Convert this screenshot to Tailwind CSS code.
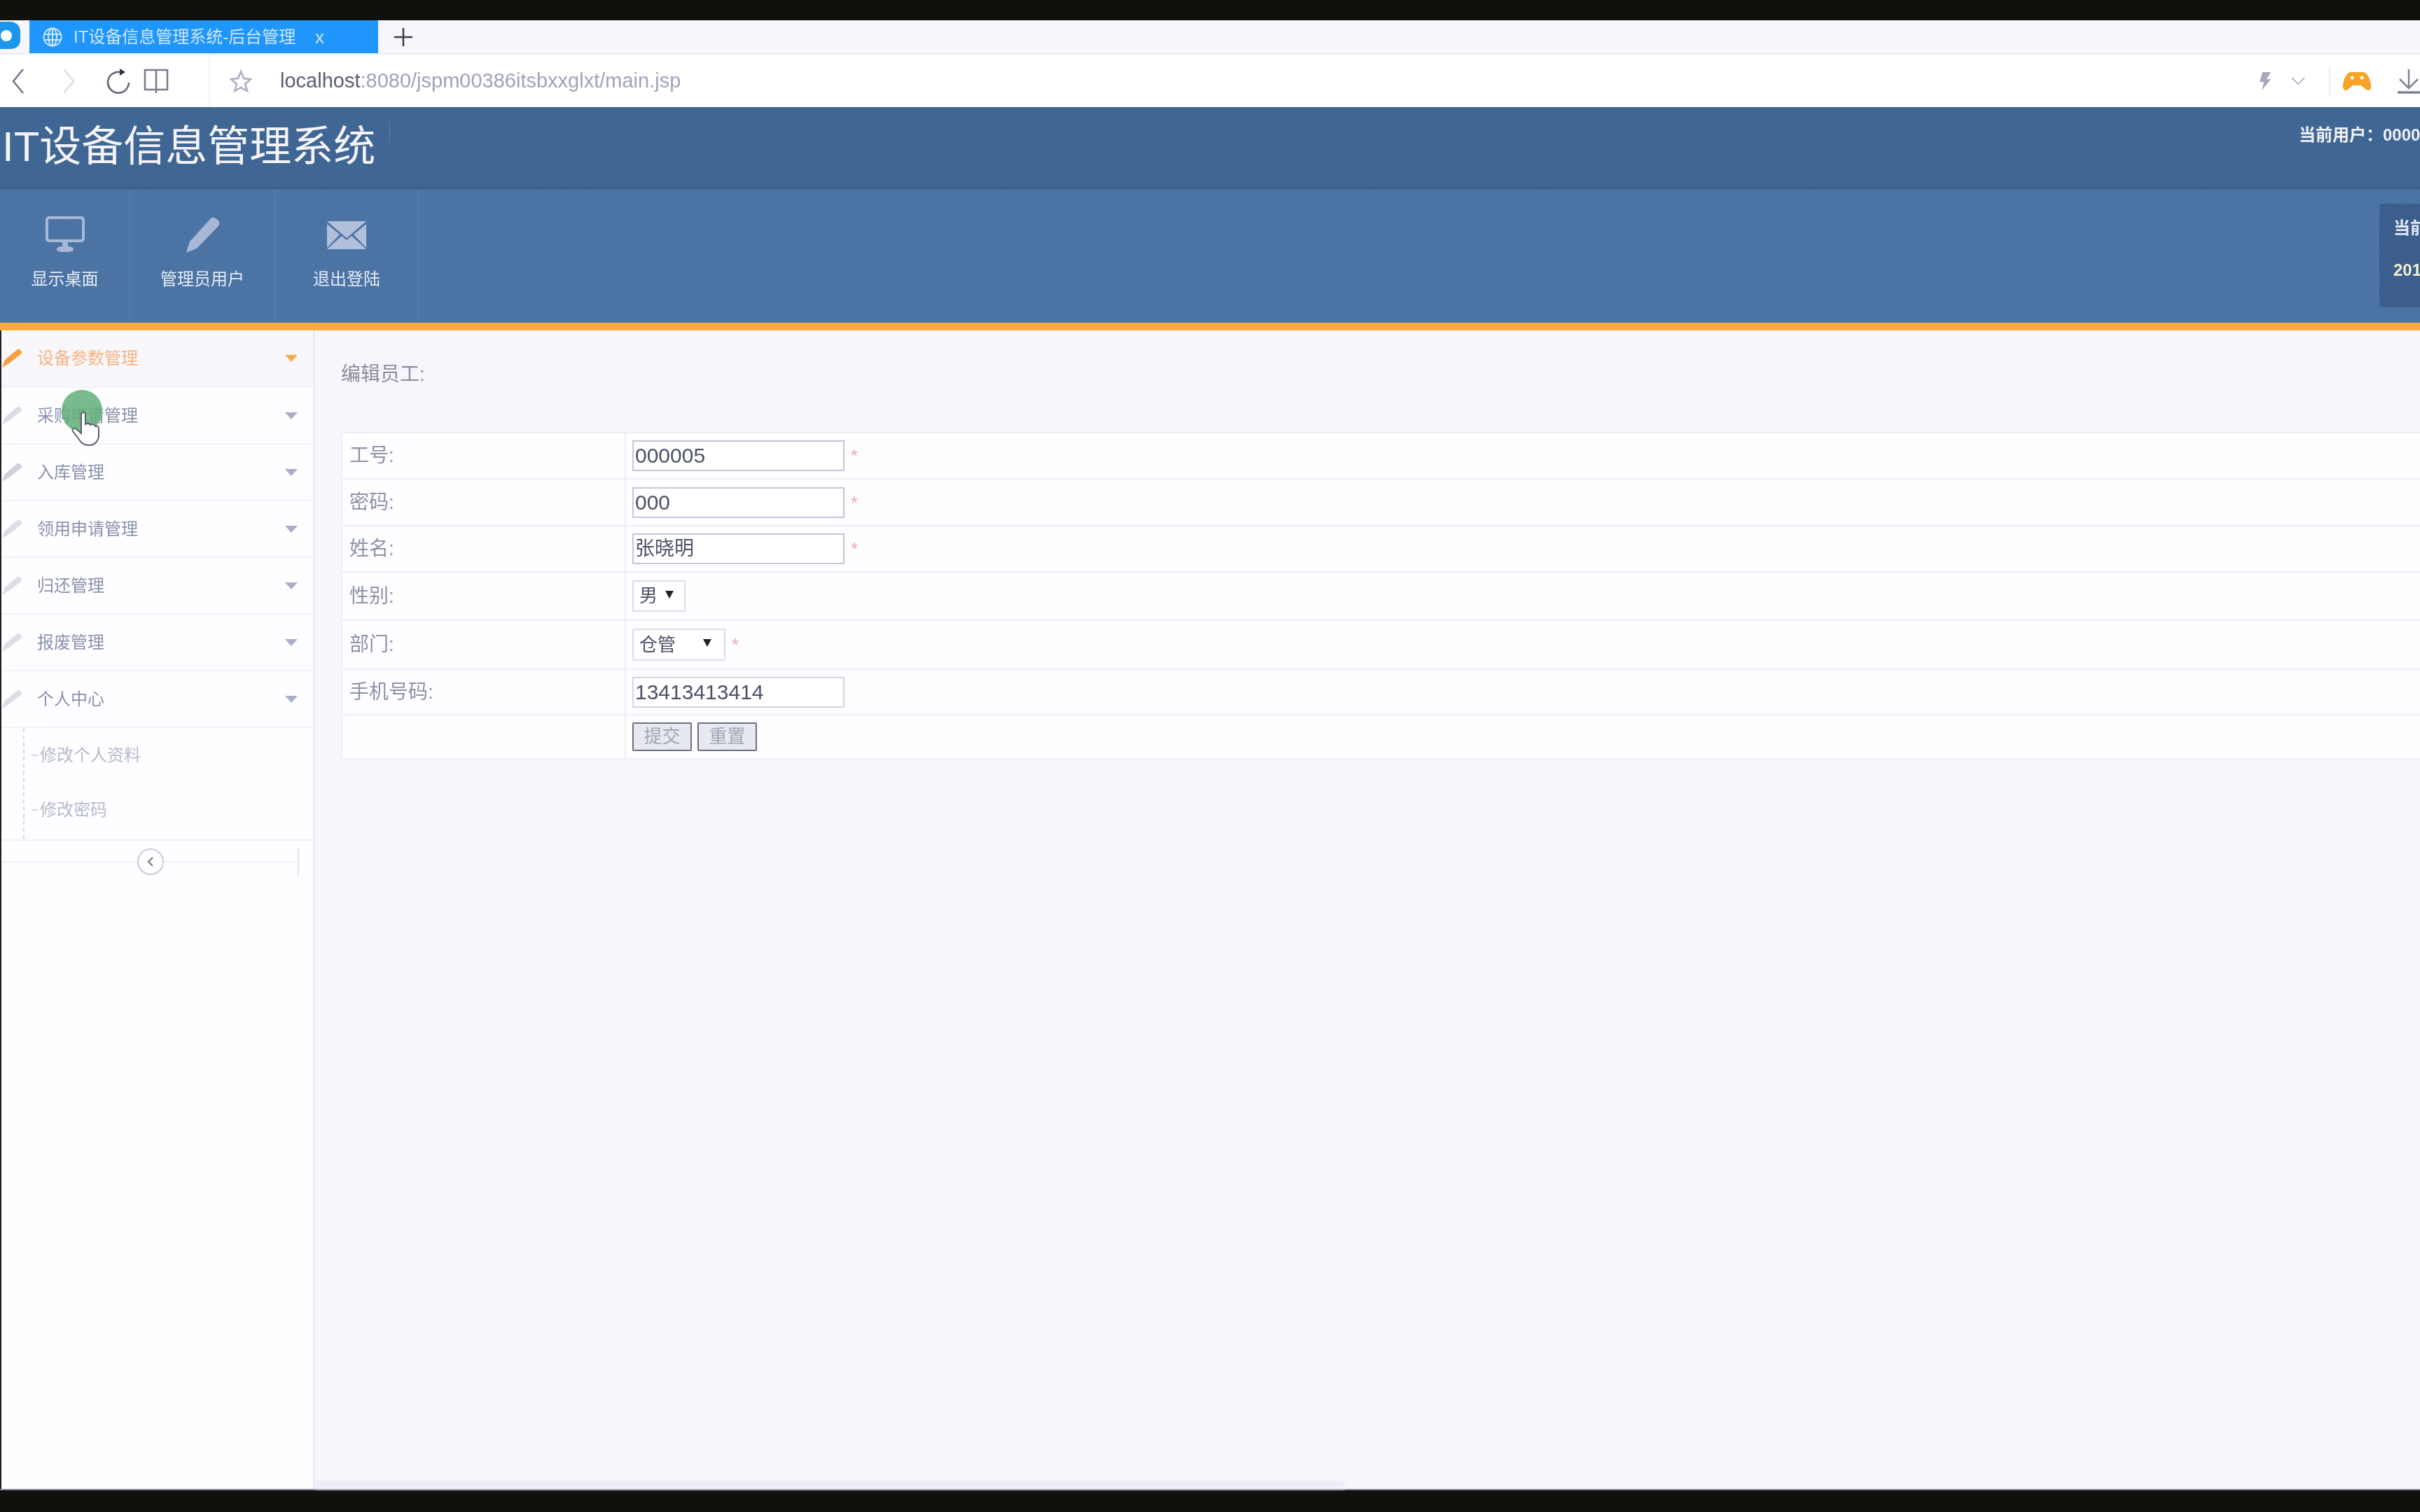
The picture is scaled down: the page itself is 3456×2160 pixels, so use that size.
<!DOCTYPE html>
<html lang="zh">
<head>
<meta charset="utf-8">
<title>IT设备信息管理系统</title>
<script src="https://cdn.jsdelivr.net/npm/@tailwindcss/browser@4"></script>
</head>
<body class="m-0 bg-[#10110d]">
<div class="relative w-[3456px] h-[2160px] overflow-hidden bg-[#10110d] flex flex-col font-['Liberation_Sans','Noto_Sans_CJK_SC',sans-serif]">
  <div class="h-[29px] shrink-0 bg-[#10110d]"></div>

  <!-- tab strip -->
  <div class="h-[49px] shrink-0 flex items-stretch bg-[#f8f6fd] border-b-2 border-[#ecebf2] blur-[0.6px]">
    <div class="w-[42px] shrink-0 flex items-start">
      <svg width="32" height="46" viewBox="0 0 32 46"><path d="M0 2h14c9 0 15 6 15 14v12c0 8-6 13-14 13H0z" fill="#1b96ea"/><circle cx="9" cy="22" r="8" fill="#fff"/></svg>
    </div>
    <div class="w-[498px] shrink-0 bg-[#1f96fb] flex items-center pl-[19px] text-[24px] text-[#cfe6fb]">
      <svg width="28" height="28" viewBox="0 0 28 28" fill="none" stroke="#cfe6fb" stroke-width="2"><circle cx="14" cy="14" r="12.5"/><ellipse cx="14" cy="14" rx="6" ry="12.5"/><path d="M2 10h24M2 18h24M14 1.500v25"/></svg>
      <span class="ml-[16px] w-[345px] whitespace-nowrap">IT设备信息管理系统-后台管理</span>
      <span class="text-[26px] leading-none">x</span>
    </div>
    <div class="ml-[22px] flex items-center">
      <svg width="28" height="28" viewBox="0 0 28 28" stroke="#3a3d48" stroke-width="2.500"><path d="M14 1v26M1 14h26"/></svg>
    </div>
  </div>

  <!-- address bar -->
  <div class="h-[75px] shrink-0 flex items-center bg-white blur-[0.6px]">
    <div class="w-[300px] shrink-0 flex items-center h-full border-r-2 border-[#f2f1f6]">
      <svg class="ml-[16px]" width="20" height="40" viewBox="0 0 20 40" fill="none" stroke="#6f7486" stroke-width="2.500"><path d="M17 3 3 20l14 17"/></svg>
      <svg class="ml-[52px]" width="20" height="40" viewBox="0 0 20 40" fill="none" stroke="#dcdde8" stroke-width="2.500"><path d="M3 3l14 17L3 37"/></svg>
      <svg class="ml-[44px]" width="36" height="38" viewBox="0 0 36 38" fill="none" stroke="#5d6172" stroke-width="2.500"><path d="M20 6A15 15 0 1 0 32 21"/><path d="M19 1l8 5-8 5z" fill="#2f3240" stroke="none"/></svg>
      <svg class="ml-[17px]" width="36" height="38" viewBox="0 0 36 38" fill="none" stroke="#777b8d" stroke-width="2.500"><path d="M2 3h32v28H2zM18 3v33"/></svg>
    </div>
    <svg class="ml-[28px]" width="32" height="34" viewBox="0 0 32 34" fill="none" stroke="#a9adc0" stroke-width="2.500"><path d="M16 3l4 10 10 1-8 7 3 10-9-5-9 5 3-10-8-7 10-1z"/></svg>
    <div class="ml-[40px] text-[29px] text-[#a0a4ba] whitespace-nowrap"><span class="text-[#5a5e70]">localhost</span>:8080/jspm00386itsbxxglxt/main.jsp</div>
    <div class="ml-auto flex items-center h-full">
      <svg width="20" height="26" viewBox="0 0 20 26" fill="#a7a8bb"><path d="M7 0h12l-6 10h6L6 26l3-12H3z"/></svg>
      <svg class="ml-[28px]" width="20" height="12" viewBox="0 0 20 12" fill="none" stroke="#b8bbcc" stroke-width="2"><path d="M1 1l9 9 9-9"/></svg>
      <div class="ml-[34px] w-[2px] h-[44px] bg-[#efeef4]"></div>
      <svg class="ml-[17px]" width="42" height="28" viewBox="0 0 42 28"><path d="M12 1h18c6 0 11 12 11 21 0 6-5 6-8 3l-6-5H15l-6 5c-3 3-8 3-8-3C1 13 6 1 12 1z" fill="#f8a327"/><circle cx="14" cy="9" r="2.500" fill="#fff"/><circle cx="28" cy="9" r="2.500" fill="#fff"/></svg>
      <svg class="ml-[37px]" width="32" height="36" viewBox="0 0 32 36" fill="none" stroke="#7e8296" stroke-width="2.500"><path d="M16 1v26M3 15l13 13 13-13"/><path d="M0 34h32" stroke-width="3.500"/></svg>
    </div>
  </div>

  <!-- header -->
  <div class="h-[117px] shrink-0 flex items-start justify-between bg-[#3e6595] bg-[repeating-linear-gradient(135deg,rgba(255,255,255,0.025)_0px,rgba(255,255,255,0.025)_2px,rgba(0,0,0,0.025)_2px,rgba(0,0,0,0.025)_4px)] border-b-2 border-[#365a88] blur-[0.6px]">
    <div class="flex items-start">
      <h1 class="m-0 pl-[3px] mt-[21px] text-[60px] leading-[72px] font-normal text-[#f3f3f8] whitespace-nowrap">IT设备信息管理系统</h1>
      <div class="ml-[20px] mt-[20px] w-[1px] h-[32px] bg-[#6384ad]"></div>
    </div>
    <div class="mt-[24px] w-[173px] shrink-0 overflow-hidden whitespace-nowrap text-[24px] leading-[32px] font-bold text-[#eef0f6]">当前用户：000005</div>
  </div>

  <!-- nav -->
  <div class="h-[191px] shrink-0 flex items-stretch justify-between bg-[#4a74a6] bg-[repeating-linear-gradient(135deg,rgba(255,255,255,0.025)_0px,rgba(255,255,255,0.025)_2px,rgba(0,0,0,0.025)_2px,rgba(0,0,0,0.025)_4px)] blur-[0.6px]">
    <div class="flex items-stretch">
      <div class="w-[186px] flex flex-col items-center border-r border-[#5a81b0] pt-[39px]">
        <svg width="56" height="53" viewBox="0 0 56 53"><rect x="2" y="2" width="52" height="33" rx="3" fill="none" stroke="#a9b7d6" stroke-width="4"/><path d="M24 35h8v8c5 0 8 2 8 4s-1 4-12 4-12-2-12-4 3-4 8-4z" fill="#a9b7d6"/></svg>
        <span class="mt-[21px] text-[24px] leading-[32px] text-[#e6eaf4]">显示桌面</span>
      </div>
      <div class="w-[207px] flex flex-col items-center border-r border-[#5a81b0] pt-[39px]">
        <svg width="52" height="53" viewBox="0 0 52 53"><path d="M38 3c3-3 8 0 11 3 2 3 2 6 0 8L18 46 3 52l5-16z" fill="#a9b7d6"/></svg>
        <span class="mt-[21px] text-[24px] leading-[32px] text-[#e6eaf4]">管理员用户</span>
      </div>
      <div class="w-[205px] flex flex-col items-center border-r border-[#5a81b0] pt-[39px]">
        <svg width="56" height="53" viewBox="0 0 56 53"><path d="M0 7h56L28 31z" fill="#b2bfdb"/><path d="M0 11v34l18-19zM56 11v34L38 26zM0 47h56L35 28l-7 6-7-6z" fill="#b2bfdb"/></svg>
        <span class="mt-[21px] text-[24px] leading-[32px] text-[#e6eaf4]">退出登陆</span>
      </div>
    </div>
    <div class="mt-[21px] h-[148px] w-[58px] shrink-0 rounded-l-[3px] bg-[#3b5e8d] pl-[20px] overflow-hidden text-[24px] whitespace-nowrap">
      <div class="mt-[19px] h-[32px] leading-[32px] font-bold text-[#e4e7f2]">当前时间</div>
      <div class="mt-[28px] h-[32px] leading-[32px] font-bold text-[#f3eecf]">2019</div>
    </div>
  </div>
  <div class="h-[11px] shrink-0 bg-[#f9aa3d]"></div>

  <!-- main -->
  <div class="h-[1655px] shrink-0 flex items-stretch bg-[#f8f6fc] border-l-2 border-[#20211f] blur-[0.7px]">
    <aside class="w-[448px] shrink-0 bg-[#fefdff] border-r-[3px] border-[#eceaf5] text-[24px] text-[#8a92ae]">
      <div class="h-[82px] flex items-center bg-[#f8f7fc] border-b-2 border-[#f3f2f8] text-[#f7b27e]">
        <svg class="ml-[1px]" width="30" height="28" viewBox="0 0 30 28"><path d="M22 1c3-1 7 3 6 6L10 21 0 27l4-11z" fill="#f5a13f"/></svg>
        <span class="ml-[20px]">设备参数管理</span>
        <svg class="ml-auto mr-[22px]" width="18" height="10" viewBox="0 0 18 10"><path d="M0 0h18l-9 10z" fill="#f9a94a"/></svg>
      </div>
      <div class="h-[81px] flex items-center border-b-2 border-[#f3f2f8]">
        <svg class="ml-[1px]" width="30" height="28" viewBox="0 0 30 28"><path d="M22 1c3-1 7 3 6 6L10 21 0 27l4-11z" fill="#dcdde6"/></svg>
        <span class="ml-[20px]">采购申请管理</span>
        <svg class="ml-auto mr-[22px]" width="18" height="10" viewBox="0 0 18 10"><path d="M0 0h18l-9 10z" fill="#a9afc4"/></svg>
      </div>
      <div class="h-[81px] flex items-center border-b-2 border-[#f3f2f8]">
        <svg class="ml-[1px]" width="30" height="28" viewBox="0 0 30 28"><path d="M22 1c3-1 7 3 6 6L10 21 0 27l4-11z" fill="#cfd0dc"/></svg>
        <span class="ml-[20px]">入库管理</span>
        <svg class="ml-auto mr-[22px]" width="18" height="10" viewBox="0 0 18 10"><path d="M0 0h18l-9 10z" fill="#a9afc4"/></svg>
      </div>
      <div class="h-[81px] flex items-center border-b-2 border-[#f3f2f8]">
        <svg class="ml-[1px]" width="30" height="28" viewBox="0 0 30 28"><path d="M22 1c3-1 7 3 6 6L10 21 0 27l4-11z" fill="#dcdde6"/></svg>
        <span class="ml-[20px]">领用申请管理</span>
        <svg class="ml-auto mr-[22px]" width="18" height="10" viewBox="0 0 18 10"><path d="M0 0h18l-9 10z" fill="#a9afc4"/></svg>
      </div>
      <div class="h-[81px] flex items-center border-b-2 border-[#f3f2f8]">
        <svg class="ml-[1px]" width="30" height="28" viewBox="0 0 30 28"><path d="M22 1c3-1 7 3 6 6L10 21 0 27l4-11z" fill="#dcdde6"/></svg>
        <span class="ml-[20px]">归还管理</span>
        <svg class="ml-auto mr-[22px]" width="18" height="10" viewBox="0 0 18 10"><path d="M0 0h18l-9 10z" fill="#a9afc4"/></svg>
      </div>
      <div class="h-[81px] flex items-center border-b-2 border-[#f3f2f8]">
        <svg class="ml-[1px]" width="30" height="28" viewBox="0 0 30 28"><path d="M22 1c3-1 7 3 6 6L10 21 0 27l4-11z" fill="#dcdde6"/></svg>
        <span class="ml-[20px]">报废管理</span>
        <svg class="ml-auto mr-[22px]" width="18" height="10" viewBox="0 0 18 10"><path d="M0 0h18l-9 10z" fill="#a9afc4"/></svg>
      </div>
      <div class="h-[81px] flex items-center border-b-2 border-[#f3f2f8]">
        <svg class="ml-[1px]" width="30" height="28" viewBox="0 0 30 28"><path d="M22 1c3-1 7 3 6 6L10 21 0 27l4-11z" fill="#dcdde6"/></svg>
        <span class="ml-[20px]">个人中心</span>
        <svg class="ml-auto mr-[22px]" width="18" height="10" viewBox="0 0 18 10"><path d="M0 0h18l-9 10z" fill="#a9afc4"/></svg>
      </div>
      <div class="h-[159px] ml-[31px] border-l-2 border-dashed border-[#d5d6e2] border-b-0 text-[#b6bbcd]">
        <div class="h-[78px] flex items-center"><span class="w-[10px]"></span><span class="w-[10px] h-[2px] bg-[#d5d6e2]"></span><span class="ml-[2px]">修改个人资料</span></div>
        <div class="h-[78px] flex items-center"><span class="w-[10px]"></span><span class="w-[10px] h-[2px] bg-[#d5d6e2]"></span><span class="ml-[2px]">修改密码</span></div>
      </div>
      <div class="border-t-2 border-[#f3f2f8] h-[62px] flex items-center pr-[20px]">
        <div class="flex-1 flex items-center relative h-[40px] border-r-2 border-[#e4e4ec]">
          <div class="w-full h-[2px] bg-[#eeeef4]"></div>
          <div class="absolute left-[194px] top-[1px] w-[38px] h-[38px] rounded-full border-2 border-[#c9cbd8] bg-white flex items-center justify-center">
            <svg width="10" height="16" viewBox="0 0 10 16" fill="none" stroke="#6f7486" stroke-width="2"><path d="M8 2 2 8l6 6"/></svg>
          </div>
        </div>
      </div>
    </aside>

    <main class="flex-1 min-w-0 pl-[37px] overflow-hidden">
      <div class="h-[145px] pt-[43px] text-[28px] leading-[40px] text-[#8b8c9a]">编辑员工:</div>
      <table class="w-[3100px] border-collapse bg-[#fefdff] text-[28px] text-[#8d92a8] table-fixed">
        <tbody>
          <tr class="h-[66px]">
            <td class="w-[405px] border-2 border-[#eeedf5] pl-[10px]">工号:</td>
            <td class="border-2 border-[#eeedf5] pl-[9px]"><div class="flex items-center"><div class="w-[303px] h-[44px] border-2 border-[#c5c6d8] bg-white px-[2px] leading-[40px] text-[#4c5166] text-[30px]">000005</div><span class="ml-[9px] text-[#e9a8b8] text-[26px] leading-[26px]">*</span></div></td>
          </tr>
          <tr class="h-[67px]">
            <td class="border-2 border-[#eeedf5] pl-[10px]">密码:</td>
            <td class="border-2 border-[#eeedf5] pl-[9px]"><div class="flex items-center"><div class="w-[303px] h-[44px] border-2 border-[#c5c6d8] bg-white px-[2px] leading-[40px] text-[#4c5166] text-[30px]">000</div><span class="ml-[9px] text-[#e9a8b8] text-[26px] leading-[26px]">*</span></div></td>
          </tr>
          <tr class="h-[66px]">
            <td class="border-2 border-[#eeedf5] pl-[10px]">姓名:</td>
            <td class="border-2 border-[#eeedf5] pl-[9px]"><div class="flex items-center"><div class="w-[303px] h-[44px] border-2 border-[#c5c6d8] bg-white px-[2px] leading-[40px] text-[#4c5166] text-[28px]">张晓明</div><span class="ml-[9px] text-[#e9a8b8] text-[26px] leading-[26px]">*</span></div></td>
          </tr>
          <tr class="h-[69px]">
            <td class="border-2 border-[#eeedf5] pl-[10px]">性别:</td>
            <td class="border-2 border-[#eeedf5] pl-[9px]"><div class="w-[76px] h-[45px] border-2 border-[#dcdce8] rounded-[3px] bg-white flex items-center pl-[8px] text-[26px] text-[#4c5166]">男<svg class="ml-[11px] mb-[6px]" width="12" height="12" viewBox="0 0 12 12"><path d="M0 1h12L6 12z" fill="#20222c"/></svg></div></td>
          </tr>
          <tr class="h-[70px]">
            <td class="border-2 border-[#eeedf5] pl-[10px]">部门:</td>
            <td class="border-2 border-[#eeedf5] pl-[9px]"><div class="flex items-center"><div class="w-[133px] h-[46px] border-2 border-[#dcdce8] rounded-[3px] bg-white flex items-center pl-[8px] text-[26px] text-[#4c5166]">仓管<svg class="ml-[39px] mb-[6px]" width="12" height="12" viewBox="0 0 12 12"><path d="M0 1h12L6 12z" fill="#20222c"/></svg></div><span class="ml-[9px] text-[#e9a8b8] text-[26px] leading-[26px]">*</span></div></td>
          </tr>
          <tr class="h-[65px]">
            <td class="border-2 border-[#eeedf5] pl-[10px]">手机号码:</td>
            <td class="border-2 border-[#eeedf5] pl-[9px]"><div class="w-[303px] h-[44px] border-2 border-[#d4d5e2] bg-white px-[2px] leading-[40px] text-[#4c5166] text-[30px]">13413413414</div></td>
          </tr>
          <tr class="h-[63px]">
            <td class="border-2 border-[#eeedf5]"></td>
            <td class="border-2 border-[#eeedf5] pl-[9px]"><div class="flex items-center gap-[8px]">
              <div class="w-[85px] h-[41px] border-2 border-[#6b6f80] rounded-[2px] bg-[#e8e8f0] flex items-center justify-center text-[26px] text-[#a4a6b6]">提交</div>
              <div class="w-[85px] h-[41px] border-2 border-[#6b6f80] rounded-[2px] bg-[#e8e8f0] flex items-center justify-center text-[26px] text-[#a4a6b6]">重置</div>
            </div></td>
          </tr>
        </tbody>
      </table>
    </main>
  </div>
  <div class="flex-1 bg-[#10110d] border-t-2 border-[#8a8a8e]"></div>

  <!-- screen-recording overlays -->
  <div class="absolute left-[88px] top-[557px] w-[58px] h-[60px] rounded-full bg-[#5fae78]/85 blur-[0.7px]"></div>
  <svg class="absolute left-[100px] top-[588px] blur-[0.5px]" width="46" height="50" viewBox="0 0 46 50" fill="#fff" stroke="#5a5f70" stroke-width="2"><path d="M16 4c0-4 6-4 6 0v14c4-2 6-1 7 1 3-2 6-1 7 2 3-1 5 0 5 4v9c0 8-6 14-14 14-7 0-11-3-14-8L4 28c-2-3 2-6 5-3l7 6z"/></svg>
  <div class="absolute left-[450px] top-[2115px] w-[1470px] h-[12px] bg-[#eeecf6] blur-[2px]"></div>
</div>
</body>
</html>
